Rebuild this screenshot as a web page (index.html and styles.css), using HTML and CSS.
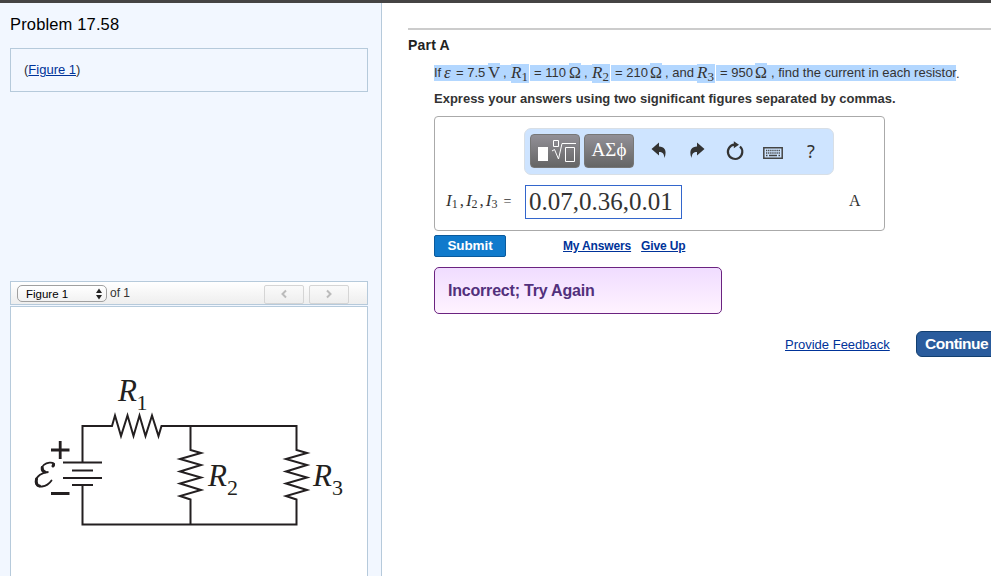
FILE: index.html
```html
<!DOCTYPE html>
<html lang="en">
<head>
  <meta charset="UTF-8" />
  <title>Problem 17.58</title>
  <link rel="stylesheet" href="styles.css">
</head>
<body>

<div class="page">
  <aside class="left">
    <h1>Problem 17.58</h1>
    <div class="intro">(<a href="#figure">Figure 1</a>)</div>

    <div class="figure-bar">
      <button class="figure-select">Figure 1
        <svg width="6" height="12" viewBox="0 0 6 12"><path d="M0 5L3 0.5L6 5ZM0 7L3 11.5L6 7Z" fill="#222"/></svg>
      </button>
      <span class="of">of 1</span>
      <button class="nav"><svg width="8" height="10" viewBox="0 0 8 10"><path d="M6 1.5L2.5 5L6 8.5" /></svg></button>
      <button class="nav"><svg width="8" height="10" viewBox="0 0 8 10"><path d="M2 1.5L5.5 5L2 8.5" /></svg></button>
    </div>

    <div class="figure" id="figure">
      <svg class="circuit" width="356" height="270" viewBox="11 307 356 270">
        <!-- wires -->
        <path d="M82.5 462V426H112L115 415.500L121 436L127.500 415.500L133.500 436L139.500 415.500L145.500 436L152 415.500L158.500 436L161.500 426H296.500V450L307 453L286 459L307 465L286 471.500L307 477.500L286 483.500L307 490L286 496L296.500 499.500V524.500H82.500V485" />
        <path d="M190.500 426V450L201 453L180 459L201 465L180 471.500L201 477.500L180 483.500L201 490L180 496L190.500 499.500V524.500" />
        <!-- battery -->
        <path d="M63 462.500H102M72 470.500H93M63 478H102M72 485H93" />
        <path class="sign" d="M51 450H69.500M60.200 441V459M51 493.500H69.500" />
        <!-- emf symbol -->
        <path class="emf" d="M53.500 466C55 463.500 53 462.300 49.500 462.700C45 463.200 41.500 466 42 469C42.300 471.500 45 472.500 48.500 472.200C42 472.500 36.500 476 36 481C35.700 485 38 487 42 486.500C46 486 49.500 483.500 51.500 480.500" />
        <path class="emf-thick" d="M42.200 467.500C42 470 43 471.500 45 472M36.500 479C35.500 483 37 485.500 39.500 486M53.600 464.500L53 466" />
        <text class="r" x="118" y="401">R</text><text class="n" x="136.500" y="409.500">1</text>
        <text class="r" x="208" y="486">R</text><text class="n" x="227" y="494.500">2</text>
        <text class="r" x="313" y="486">R</text><text class="n" x="332" y="494.500">3</text>
      </svg>
    </div>
  </aside>

  <main class="right">
    <h2>Part A</h2>
    <p class="question"><span class="hl w-if">If</span><i class="hl w-eps">ε</i><span class="hl w-v">= 7.5</span><span class="hl sym w-volt">V</span><span class="hl comma">,</span><i class="hl sym w-r">R<sub>1</sub></i><span class="hl w-num">= 110</span><span class="hl sym w-ohm">Ω</span><span class="hl comma">,</span><i class="hl sym w-r">R<sub>2</sub></i><span class="hl w-num">= 210</span><span class="hl sym w-ohm">Ω</span><span class="hl w-and">, and</span><i class="hl sym w-r">R<sub>3</sub></i><span class="hl w-num">= 950</span><span class="hl sym w-ohm">Ω</span><span class="hl w-find">, find the current in each resistor</span>.</p>
    <p class="express">Express your answers using two significant figures separated by commas.</p>

    <div class="answer-box">
      <div class="toolbar">
        <button class="tool">
          <svg width="50" height="34" viewBox="0 0 50 34"><path d="M8 13H18V27H8Z" fill="#fff" stroke="none"/><path d="M23.500 6.500H28.500V12.500H23.500ZM35.500 13.500H44.500V27.500H35.500Z"/><path d="M22 17L24.500 15.500L28.500 25L32 9.500H46"/></svg>
        </button>
        <button class="tool greek">ΑΣϕ</button>
        <span class="icon"><svg width="20" height="20" viewBox="0 0 20 20"><path d="M2.500 8L10 1.500V5.500C15 5.500 18.500 9 15.500 17C15 12.500 13.500 11 10 11V14.500Z"/></svg></span>
        <span class="icon"><svg width="20" height="20" viewBox="0 0 20 20"><path d="M17.500 8L10 1.500V5.500C5 5.500 1.500 9 4.500 17C5 12.500 6.500 11 10 11V14.500Z"/></svg></span>
        <span class="icon"><svg width="20" height="20" viewBox="0 0 20 20"><path class="line" d="M15 5.500A7.200 7.200 0 1 1 9.500 3.600"/><path d="M8.800 0.300L14 3.700L8.800 7.300Z"/></svg></span>
        <span class="icon kb"><svg width="20" height="12" viewBox="0 0 20 12"><path class="frame" d="M0.800 0.800H19.200V11.200H0.800Z"/><path class="keys" d="M3 3.500H17M3 6H17"/><path class="space" d="M3 8.500H4.500M6 8.500H14M15.500 8.500H17"/></svg></span>
        <span class="icon help">?</span>
      </div>
      <div class="answer-row">
        <span class="label"><i>I</i><sub>1</sub><b>,</b><i>I</i><sub>2</sub><b>,</b><i>I</i><sub>3</sub><em>=</em></span>
        <div class="answer">0.07,0.36,0.01</div>
        <span class="unit">A</span>
      </div>
    </div>

    <div class="actions">
      <button class="submit">Submit</button>
      <a class="my" href="#">My Answers</a>
      <a href="#">Give Up</a>
    </div>
    <div class="feedback">Incorrect; Try Again</div>

    <div class="bottom">
      <a href="#">Provide Feedback</a>
      <button class="continue">Continue</button>
    </div>
  </main>
</div>

</body>
</html>
```
FILE: styles.css
```css
* {
  box-sizing: border-box;
}

body {
  margin: 0;
  height: 576px;
  overflow: hidden;
  font-family: "Liberation Sans", Arial, sans-serif;
  font-size: 13px;
  color: #333;
  background: #fff;
}

h1, h2, p {
  margin: 0;
}

button {
  font-family: inherit;
  padding: 0;
  margin: 0;
}

a {
  color: #039;
  text-decoration: underline;
}

.page {
  display: flex;
  height: 576px;
  border-top: 3px solid #454444;
}

/* left column */
.left {
  display: flex;
  flex-direction: column;
  width: 382px;
  flex: none;
  padding: 11px 13px 0 10px;
  background: #f2f7ff;
  border-right: 1px solid #b6cadb;
}

h1 {
  height: 34px;
  font-size: 16.5px;
  font-weight: normal;
  line-height: 20px;
  letter-spacing: 0.15px;
  color: #000;
}

.intro {
  height: 44px;
  padding-left: 13px;
  border: 1px solid #b6cadb;
  line-height: 42px;
}

.figure-bar {
  display: flex;
  height: 24px;
  margin-top: 189px;
  padding: 3px 18px 0 6px;
  border: 1px solid #b6cadb;
  background: linear-gradient(#fff, #eee);
  font-size: 12px;
}

.figure-select {
  display: flex;
  justify-content: space-between;
  align-items: center;
  width: 90px;
  height: 17px;
  padding: 0 4px 0 8px;
  border: 1px solid #a0a0a0;
  border-radius: 5px;
  background: linear-gradient(#fff, #f2f2f2);
  font-size: 11.5px;
  color: #000;
}

.of {
  flex: 1;
  margin-left: 3px;
  line-height: 17px;
}

.nav {
  width: 40px;
  height: 19px;
  margin-left: 5px;
  border: 1px solid #d5d5d5;
  border-radius: 2px;
  background: linear-gradient(#fafafa, #eee);
  line-height: 10px;
}

.nav svg {
  fill: none;
  stroke: #bbb;
  stroke-width: 2;
}

.figure {
  flex: 1;
  margin-top: 1px;
  border: 1px solid #b6cadb;
  border-bottom: none;
  background: #fff;
  overflow: hidden;
}

.circuit {
  display: block;
  fill: none;
  stroke: #231f20;
  stroke-width: 2;
}

.circuit .sign {
  stroke-width: 2.8;
}

.circuit .emf {
  stroke-width: 1.8;
  stroke-linecap: round;
}

.circuit .emf-thick {
  stroke-width: 3;
  stroke-linecap: round;
}

.circuit text {
  fill: #231f20;
  stroke: none;
  font-family: "Liberation Serif", serif;
}

.circuit .r {
  font-size: 31px;
  font-style: italic;
}

.circuit .n {
  font-size: 22px;
}

/* right column */
.right {
  flex: 1;
  min-width: 0;
  margin: 25px 0 0 26px;
  border-top: 2px solid #ccc;
}

h2 {
  height: 30px;
  padding-top: 6px;
  font-size: 14px;
  line-height: 18px;
  letter-spacing: 0.2px;
  color: #222;
}

.question {
  display: flex;
  align-items: center;
  height: 26px;
  margin-left: 26px;
  white-space: pre;
}

.hl {
  flex: none;
  height: 16px;
  line-height: 16px;
  background: #b3d7ff;
}

.sym,
.w-eps {
  font-family: "Liberation Serif", serif;
  font-size: 17px;
}

.sym {
  height: 18px;
  margin-top: -2px;
  line-height: 19px;
}

.sym sub {
  font-size: 13px;
  font-style: normal;
  line-height: 0;
  vertical-align: -3px;
}

.w-if { width: 10px; }
.w-eps { width: 12px; line-height: 15px; }
.w-v { width: 32px; }
.w-volt { width: 12px; }
.comma { width: 11px; padding-left: 3px; }
.w-r { width: 18px; height: 19px; margin-top: 0; margin-right: 1px; line-height: 17px; }
.w-num { width: 39px; padding-left: 4px; }
.w-ohm { width: 12px; font-size: 16px; }
.w-and { width: 35px; padding-left: 3px; }
.w-find { width: 189px; padding-left: 4px; }

.express {
  height: 30px;
  margin-left: 26px;
  font-weight: bold;
  line-height: 25px;
}

.answer-box {
  width: 451px;
  height: 115px;
  margin-left: 26px;
  padding: 11px 0 0 10px;
  border: 1px solid #aaa;
  border-radius: 4px;
}

.toolbar {
  display: flex;
  width: 310px;
  height: 47px;
  margin-left: 79px;
  padding: 5px;
  border: 1px solid #d8dfe6;
  border-radius: 7px;
  background: #cee4ff;
}

.tool {
  flex: none;
  width: 50px;
  height: 34px;
  margin-right: 4px;
  border: 1px solid #777;
  border-radius: 4px;
  background: linear-gradient(#929097, #656565);
  color: #fff;
}

.tool svg {
  display: block;
  margin: -1px;
  fill: none;
  stroke: #fff;
}

.greek {
  margin-right: 6px;
  padding-bottom: 2px;
  font-family: "Liberation Serif", serif;
  font-size: 19px;
}

.icon {
  display: flex;
  flex: none;
  justify-content: center;
  align-items: center;
  width: 38px;
  height: 34px;
}

.icon svg {
  fill: #333;
}

.icon .line {
  fill: none;
  stroke: #333;
  stroke-width: 2.2;
}

.kb {
  padding-top: 4px;
}

.kb path {
  fill: none;
  stroke: #444;
  stroke-width: 1.5;
}

.kb .keys {
  stroke-width: 1.3;
  stroke-dasharray: 1.3 0.8;
}

.help {
  font-family: "Noto Sans", sans-serif;
  font-size: 18px;
}

.answer-row {
  display: flex;
  align-items: center;
  height: 34px;
  margin-top: 10px;
  font-family: "Liberation Serif", serif;
}

.label {
  width: 80px;
  padding: 0 0 3px 1px;
  font-size: 17px;
  white-space: nowrap;
}

.label sub {
  font-size: 12px;
  line-height: 0;
  vertical-align: -2px;
}

.label b {
  margin: 0 2px 0 2px;
  font-weight: normal;
}

.label em {
  margin-left: 6px;
  font-size: 14px;
  font-style: normal;
}

.answer {
  flex: none;
  width: 157px;
  height: 34px;
  padding-left: 3px;
  border: 1px solid #36c;
  font-size: 25px;
  line-height: 32px;
}

.unit {
  margin-left: 167px;
  padding-bottom: 2px;
  font-size: 16px;
}

.actions {
  display: flex;
  height: 22px;
  margin: 4px 0 0 26px;
  font-size: 12px;
  font-weight: bold;
  line-height: 22px;
  letter-spacing: -0.15px;
}

.submit {
  width: 72px;
  height: 22px;
  border: 1px solid #0a5a9c;
  border-radius: 2px;
  background: #107acc;
  font-size: 13.5px;
  font-weight: bold;
  line-height: 18px;
  letter-spacing: -0.1px;
  color: #fff;
}

.my {
  margin: 0 10px 0 57px;
}

.feedback {
  width: 288px;
  height: 47px;
  margin: 10px 0 0 26px;
  padding-left: 13px;
  border: 1px solid #6b2380;
  border-radius: 5px;
  background: linear-gradient(#f0dcff, #fff3ff);
  font-size: 16px;
  font-weight: bold;
  line-height: 46px;
  letter-spacing: -0.2px;
  color: #52307c;
}

.bottom {
  display: flex;
  margin: 17px 0 0 377px;
  line-height: 27px;
  white-space: nowrap;
}

.bottom a {
  flex: none;
  width: 105px;
}

.continue {
  flex: none;
  width: 84px;
  height: 26px;
  margin-left: 26px;
  padding-left: 8px;
  border: 1px solid #123f70;
  border-radius: 6px;
  background: #2a5c9d;
  font-size: 15.5px;
  font-weight: bold;
  letter-spacing: -0.5px;
  text-align: left;
  color: #fff;
}
```
